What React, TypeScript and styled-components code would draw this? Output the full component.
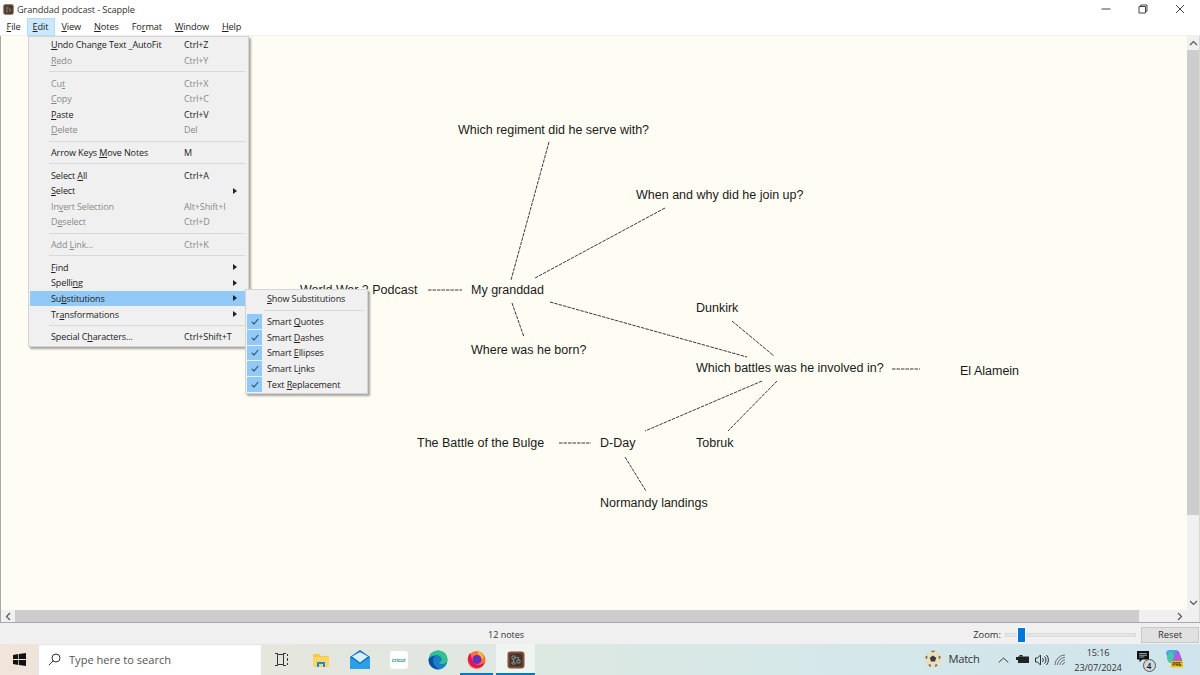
import React from "react";
import styled, { createGlobalStyle } from "styled-components";

const Global = createGlobalStyle`
  html, body { margin: 0; padding: 0; width: 1200px; height: 675px; overflow: hidden; background: #fff; }
  body { font-family: "Open Sans", "Liberation Sans", sans-serif; color: #1c1c1c; }
  * { box-sizing: border-box; }
  u { text-underline-offset: 1px; text-decoration-thickness: 1px; }
`;

const Page = styled.div`
  width: 1200px; height: 675px; position: relative;
  display: flex; flex-direction: column; overflow: hidden;
`;
const TitleBar = styled.div`
  height: 18px; flex: none; display: flex; align-items: center; padding: 0 2px 0 3px; gap: 3px; background: #fff;
`;
const TitleText = styled.span`font-size: 9.2px; letter-spacing: -0.1px; color: #333; flex: 1;`;
const WinControls = styled.div`display: flex; align-items: center; height: 18px;`;
const WinButton = styled.div`width: 37px; height: 18px; display: flex; align-items: center; justify-content: center;`;
const MenuBar = styled.div`
  height: 18px; flex: none; display: flex; background: #fff; font-size: 9.2px; letter-spacing: -0.12px; border-bottom: 1px solid #f0f0f0;
`;
const MenuTitle = styled.div<{ $open?: boolean }>`
  padding: ${p => (p.$open ? "0 6.5px 0 5.5px" : "0 6.5px")}; line-height: 17px; height: 18px; color: #222;
  background: ${p => (p.$open ? "#cce8ff" : "transparent")};
  box-shadow: ${p => (p.$open ? "inset 0 0 0 1px #b4dcfa" : "none")};
`;

const Workspace = styled.div`
  flex: none; height: 587px; display: grid;
  grid-template-columns: 1186px 13px; grid-template-rows: 574px 12px;
  border-left: 1px solid #a8a8a8; border-bottom: 1px solid #a8a8a8;
`;
const Canvas = styled.div`position: relative; background: #fffdf3; overflow: hidden;`;
const Links = styled.svg`position: absolute; left: -1px; top: -36px;`;
const Note = styled.div<{ $x: number; $y: number }>`
  position: absolute; left: ${p => p.$x - 1}px; top: ${p => p.$y - 36 - 9}px;
  font: 12.5px/18px "Liberation Sans", Arial, sans-serif; color: #1a1a1a; white-space: nowrap;
`;
const VScroll = styled.div`
  background: #f0f0f0; display: flex; flex-direction: column; align-items: center; border-right: 1px solid #d8d8d8;
`;
const VArrow = styled.div`height: 14px; width: 100%; display: flex; align-items: center; justify-content: center; flex: none;`;
const VThumb = styled.div`width: 100%; height: 465px; background: #cdcdcd; flex: none;`;
const VTrack = styled.div`flex: 1;`;
const HScroll = styled.div`background: #f0f0f0; display: flex; align-items: center;`;
const HArrow = styled.div`width: 14px; height: 100%; display: flex; align-items: center; justify-content: center; flex: none;`;
const HThumb = styled.div`width: 1124px; height: 100%; background: #cdcdcd; flex: none;`;
const HTrack = styled.div`flex: 1;`;
const Corner = styled.div`background: #f0f0f0; border-right: 1px solid #d8d8d8;`;

const StatusBar = styled.div`
  height: 21px; flex: none; background: #f0f0f0; display: flex; align-items: center; font-size: 9px; color: #333; padding-top: 2px;
`;
const NoteCount = styled.span`margin-left: 488px;`;
const ZoomGroup = styled.div`margin-left: auto; display: flex; align-items: center;`;
const ZoomLabel = styled.span`margin-right: 4px; font-size: 9.4px;`;
const ZoomTrack = styled.div`width: 131px; height: 4px; background: #e4e4e4; border: 1px solid #dcdcdc; position: relative;`;
const ZoomThumb = styled.div`position: absolute; left: 11px; top: -7px; width: 9px; height: 16px; background: #0078d7; border: 1px solid #fff;`;
const ResetButton = styled.div`
  width: 58px; height: 16px; margin: 0 1px 0 5px; background: #e1e1e1; border: 1px solid #c8c8c8;
  text-align: center; line-height: 14px; font-size: 9.4px;
`;

const Taskbar = styled.div`
  height: 31px; flex: none; display: flex; align-items: stretch;
  background: linear-gradient(90deg, #f1e4da 0%, #e6e6dd 22%, #dde8e2 45%, #d6e8e8 65%, #cfe4ec 100%);
`;
const StartButton = styled.div`width: 38px; display: flex; align-items: center; justify-content: center;`;
const SearchBox = styled.div`
  width: 224px; background: #fff; display: flex; align-items: center; padding: 0 0 2px 9px; gap: 8px;
  font-size: 11.1px; color: #555; border: 1px solid #e4e4e4; border-bottom: 0;
`;
const TaskSlot = styled.div<{ $active?: boolean; $running?: boolean }>`
  width: 39px; display: flex; align-items: center; justify-content: center; position: relative;
  background: ${p => (p.$active ? "rgba(255,255,255,.55)" : "transparent")};
  &::after {
    content: ""; position: absolute; bottom: 0; height: 2px; background: #0078d4;
    left: ${p => (p.$running ? "3px" : "0")}; right: ${p => (p.$running ? "3px" : "0")};
    display: ${p => (p.$active || p.$running ? "block" : "none")};
  }
`;
const CricutTile = styled.div`
  width: 18px; height: 18px; background: #fff; border-radius: 3px; display: flex; align-items: center; justify-content: center;
  font: bold 5.2px "Liberation Sans", sans-serif; color: #1f9d78; letter-spacing: -0.1px;
`;
const Tray = styled.div`margin-left: auto; display: flex; align-items: center; color: #333; padding: 0 10px 2px 0;`;
const Weather = styled.div`display: flex; align-items: center; gap: 7px; font-size: 11.2px; letter-spacing: -0.3px; margin-right: 14.5px;`;
const TrayIcon = styled.div`width: 19px; display: flex; align-items: center; justify-content: center; padding-top: 2px;`;
const Clock = styled.div`width: 56px; text-align: center; font-size: 9.2px; letter-spacing: -0.15px; line-height: 15px; color: #333; padding-top: 2px;`;
const NotifyWrap = styled.div`width: 28px; margin-left: 4px; height: 24px; position: relative; display: flex; align-items: center; justify-content: center;`;
const Badge = styled.div`
  position: absolute; left: 12.5px; top: 12px; width: 13px; height: 13px; border-radius: 50%;
  background: #cfd8dc; border: 1px solid #555; font-size: 8px; line-height: 11px; text-align: center; color: #111; font-weight: 600;
`;
const CopilotWrap = styled.div`width: 32px; display: flex; align-items: center; justify-content: center;`;

const PopupMenu = styled.div`
  position: absolute; left: 28px; top: 36px; width: 221px; height: 311px; padding: 0 0 0 1px;
  background: #f0f0f0; border: 1px solid #d4d4d4; box-shadow: 2px 2px 2px rgba(0,0,0,.35); z-index: 2;
  font-size: 9px; letter-spacing: -0.12px;
`;
const SubMenu = styled.div`
  position: absolute; left: 245px; top: 289px; width: 123px; height: 105px; padding: 1px 0 0 0;
  background: #f0f0f0; border: 1px solid #d4d4d4; box-shadow: 2px 2px 2px rgba(0,0,0,.35); z-index: 3;
  font-size: 9px; letter-spacing: -0.12px;
`;
const MenuRow = styled.div<{ $disabled?: boolean; $hot?: boolean }>`
  height: 15.6px; display: grid; grid-template-columns: 21px 133px 50px 10px; align-items: center; white-space: nowrap;
  line-height: 15px;
  color: ${p => (p.$disabled ? "#8a8a8a" : "#222")};
  background: ${p => (p.$hot ? "#91c9f7" : "transparent")};
`;
const RowLabel = styled.span`grid-column: 2;`;
const RowKey = styled.span`grid-column: 3 / 5;`;
const RowArrow = styled.span`
  grid-column: 4; justify-self: start; width: 0; height: 0; margin-left: -1px;
  border-left: 4px solid #222; border-top: 3px solid transparent; border-bottom: 3px solid transparent;
`;
const MenuSep = styled.div`height: 1px; background: #d9d9d9; margin: 3px 3px 3.07px 19px;`;
const SubSep = styled.div`height: 1px; background: #d9d9d9; margin: 3px 3px 3.4px 18px;`;
const SubRow = styled.div`
  height: 15.6px; display: grid; grid-template-columns: 15px 1fr; column-gap: 5px; align-items: center; padding-left: 1px; line-height: 15px; color: #222; white-space: nowrap;
`;
const CheckCell = styled.div<{ $on?: boolean }>`
  height: 14.8px; display: flex; align-items: center; justify-content: center;
  background: ${p => (p.$on ? "#91c9f7" : "transparent")};
`;

const Lab = ({ t }: { t: string }) => {
  const i = t.indexOf("&");
  if (i < 0) return <>{t}</>;
  return <>{t.slice(0, i)}<u>{t[i + 1]}</u>{t.slice(i + 2)}</>;
};

type Item = { l?: string; k?: string; d?: boolean; a?: boolean; hot?: boolean; sep?: boolean };
const items: Item[] = [
  { l: "&Undo Change Text _AutoFit", k: "Ctrl+Z" },
  { l: "&Redo", k: "Ctrl+Y", d: true },
  { sep: true },
  { l: "Cu&t", k: "Ctrl+X", d: true },
  { l: "&Copy", k: "Ctrl+C", d: true },
  { l: "&Paste", k: "Ctrl+V" },
  { l: "&Delete", k: "Del", d: true },
  { sep: true },
  { l: "Arrow Keys &Move Notes", k: "M" },
  { sep: true },
  { l: "Select &All", k: "Ctrl+A" },
  { l: "&Select", a: true },
  { l: "In&vert Selection", k: "Alt+Shift+I", d: true },
  { l: "D&eselect", k: "Ctrl+D", d: true },
  { sep: true },
  { l: "Add &Link...", k: "Ctrl+K", d: true },
  { sep: true },
  { l: "&Find", a: true },
  { l: "Spelli&ng", a: true },
  { l: "Su&bstitutions", a: true, hot: true },
  { l: "Tr&ansformations", a: true },
  { sep: true },
  { l: "Special C&haracters...", k: "Ctrl+Shift+T" },
];
const subs = ["Smart &Quotes", "Smart &Dashes", "Smart &Ellipses", "Smart L&inks", "Text &Replacement"];
const menus = ["&File", "&Edit", "&View", "&Notes", "Fo&rmat", "&Window", "&Help"];
const notes: [string, number, number][] = [
  ["Which regiment did he serve with?", 458, 130],
  ["When and why did he join up?", 636, 195],
  ["World War 2 Podcast", 300, 290],
  ["My granddad", 471, 290],
  ["Where was he born?", 471, 350],
  ["Dunkirk", 696, 308],
  ["Which battles was he involved in?", 696, 368],
  ["El Alamein", 960, 371],
  ["The Battle of the Bulge", 417, 443],
  ["D-Day", 600, 443],
  ["Tobruk", 696, 443],
  ["Normandy landings", 600, 503],
];
const lines: number[][] = [
  [549, 142, 511, 280], [665, 208, 535, 278], [428, 290, 462, 290], [550, 302, 747, 357],
  [512, 303, 524, 337], [732, 321, 774, 356], [762, 381, 645, 431], [777, 381, 728, 431],
  [559, 443, 591, 443], [625, 457, 646, 491], [892, 369, 920, 369],
];

const ScappleIcon = ({ s }: { s: number }) => (
  <svg width={s} height={s} viewBox="0 0 18 18">
    <rect x="0.5" y="0.5" width="17" height="17" rx="3" fill="#8a4f33" />
    <rect x="2.5" y="2.5" width="13" height="13" rx="1.5" fill="#3b3632" />
    <path d="M5 5h3v3H5zM10 9h3v3h-3zM5 11h3v2H5z" fill="none" stroke="#9b948c" strokeWidth=".9" />
    <path d="M8 6.5h3.5V9M6.5 8v3" fill="none" stroke="#9b948c" strokeWidth=".8" />
  </svg>
);

export default function App() {
  return (
    <Page>
      <Global />
      <TitleBar>
        <ScappleIcon s={11} />
        <TitleText>Granddad podcast - Scapple</TitleText>
        <WinControls>
          <WinButton>
            <svg width="10" height="10" viewBox="0 0 10 10"><path d="M0.5 5h9" stroke="#444" /></svg>
          </WinButton>
          <WinButton>
            <svg width="10" height="10" viewBox="0 0 10 10"><path d="M1 2.5h6.5V9H1zM2.8 2.5V1H9v6.2H7.5" fill="none" stroke="#444" /></svg>
          </WinButton>
          <WinButton>
            <svg width="10" height="10" viewBox="0 0 10 10"><path d="M1 1l8 8M9 1l-8 8" stroke="#444" /></svg>
          </WinButton>
        </WinControls>
      </TitleBar>
      <MenuBar>
        {menus.map(m => (
          <MenuTitle key={m} $open={m === "&Edit"}><Lab t={m} /></MenuTitle>
        ))}
      </MenuBar>
      <Workspace>
        <Canvas>
          <Links width="1200" height="675">
            {lines.map((l, i) => (
              <line key={i} x1={l[0]} y1={l[1]} x2={l[2]} y2={l[3]} stroke="#222" strokeWidth="0.9" strokeDasharray="3.5 1" />
            ))}
          </Links>
          {notes.map(([t, x, y]) => (
            <Note key={t} $x={x} $y={y}>{t}</Note>
          ))}
        </Canvas>
        <VScroll>
          <VArrow>
            <svg width="9" height="6" viewBox="0 0 9 6"><path d="M1 5l3.5-3.5L8 5" fill="none" stroke="#555" strokeWidth="1.2" /></svg>
          </VArrow>
          <VThumb />
          <VTrack />
          <VArrow>
            <svg width="9" height="6" viewBox="0 0 9 6"><path d="M1 1l3.5 3.5L8 1" fill="none" stroke="#555" strokeWidth="1.2" /></svg>
          </VArrow>
        </VScroll>
        <HScroll>
          <HArrow>
            <svg width="6" height="9" viewBox="0 0 6 9"><path d="M5 1L1.5 4.5 5 8" fill="none" stroke="#555" strokeWidth="1.2" /></svg>
          </HArrow>
          <HThumb />
          <HTrack />
          <HArrow>
            <svg width="6" height="9" viewBox="0 0 6 9"><path d="M1 1l3.5 3.5L1 8" fill="none" stroke="#555" strokeWidth="1.2" /></svg>
          </HArrow>
        </HScroll>
        <Corner />
      </Workspace>
      <StatusBar>
        <NoteCount>12 notes</NoteCount>
        <ZoomGroup>
          <ZoomLabel>Zoom:</ZoomLabel>
          <ZoomTrack><ZoomThumb /></ZoomTrack>
          <ResetButton>Reset</ResetButton>
        </ZoomGroup>
      </StatusBar>
      <Taskbar>
        <StartButton>
          <svg width="13" height="13" viewBox="0 0 13 13"><path d="M0 1.9l5.3-.8v5H0zM6 1L13 0v6.1H6zM0 6.9h5.3v5L0 11.1zM6 6.9h7V13l-7-1z" fill="#111" /></svg>
        </StartButton>
        <SearchBox>
          <svg width="13" height="13" viewBox="0 0 13 13"><circle cx="8" cy="5" r="4" fill="none" stroke="#333" /><path d="M5.2 7.8L.8 12.2" stroke="#333" /></svg>
          Type here to search
        </SearchBox>
        <TaskSlot>
          <svg width="14" height="13" viewBox="0 0 14 13"><path d="M2.5 1.5h6v10h-6zM0 .5h3M0 12.5h3M8 .5h3M8 12.5h3" fill="none" stroke="#333" /><path d="M12.5 1v2M12.5 5v3M12.5 10v2" stroke="#333" /></svg>
        </TaskSlot>
        <TaskSlot>
          <svg width="18" height="16" viewBox="0 0 18 16">
            <path d="M1 2h6l2 2h8v10H1z" fill="#f7c843" />
            <path d="M1 5h16v9a1 1 0 0 1-1 1H2a1 1 0 0 1-1-1z" fill="#fbd667" />
            <path d="M5 15v-5h8v5h-2v-3H7v3z" fill="#1f86d8" />
          </svg>
        </TaskSlot>
        <TaskSlot>
          <svg width="20" height="19" viewBox="0 0 20 19">
            <path d="M10 0l10 7v11a1 1 0 0 1-1 1H1a1 1 0 0 1-1-1V7z" fill="#0f6cbd" />
            <path d="M2 6.5L10 2l8 4.5-8 6z" fill="#d9f0fb" />
            <path d="M0 7l10 7 10-7v11a1 1 0 0 1-1 1H1a1 1 0 0 1-1-1z" fill="#2aa0e6" />
          </svg>
        </TaskSlot>
        <TaskSlot><CricutTile>cricut</CricutTile></TaskSlot>
        <TaskSlot>
          <svg width="20" height="20" viewBox="0 0 20 20">
            <circle cx="10" cy="10" r="9.5" fill="#1a7fc9" />
            <path d="M.7 9C2 3.5 6 .5 10 .5c5.5 0 9.5 4 9.5 8.800 0 3.200-2.500 4.700-5 4.700-1.500 0-3-.5-3.500-1.500 2.500-.5 3.500-2.500 2.500-4.500C12 5.500 9 4.500 6 5.500 3.500 6.300 1.500 7.500.7 9z" fill="#2fc28b" />
            <path d="M.7 9c1.500-2 4-3.200 6.500-3 -2.500 1.500-3 5 -1.500 8 1.200 2.400 3.500 4.500 6.300 5.300C6 20 0 15.500.7 9z" fill="#0b4f9e" />
          </svg>
        </TaskSlot>
        <TaskSlot $running>
          <svg width="19" height="19" viewBox="0 0 19 19">
            <circle cx="9.500" cy="10" r="9" fill="#ff7139" />
            <path d="M3 3c-2.500 3-2.500 7-1 10 2 4 6 5.500 9 5 3-.5 6-3 7-6-3 3-8 4-11 1C4.500 10.500 5 7 3 3z" fill="#e3145a" />
            <circle cx="10" cy="9.500" r="4.600" fill="#6b2fc0" />
            <path d="M11 0c1 2 4 3 5 6 .5 2 0 3-1 4-.5-3-2-5-4-6z" fill="#ffc02e" />
          </svg>
        </TaskSlot>
        <TaskSlot $active><ScappleIcon s={18} /></TaskSlot>
        <Tray>
          <Weather>
            <svg width="18" height="18" viewBox="0 0 18 18">
              <circle cx="9" cy="9" r="8.500" fill="#e8dfc0" />
              <path d="M9 5.500l3.200 2.300-1.200 3.700H7l-1.200-3.700z" fill="#3e3b32" />
              <path d="M6.500 .8L9 2.500l2.500-1.700zM1 7l2.500-1.500L3 9.500zM17 7l-2.500-1.500L15 9.500zM4 15l2.500-1 .5 3.200zM14 15l-2.500-1-.5 3.200z" fill="#6d6755" />
            </svg>
            Match
          </Weather>
          <TrayIcon>
            <svg width="11" height="6" viewBox="0 0 11 6"><path d="M.7 5.500L5.500 1l4.800 4.500" fill="none" stroke="#333" /></svg>
          </TrayIcon>
          <TrayIcon>
            <svg width="14" height="9" viewBox="0 0 14 9"><rect x="2" y="1.500" width="11" height="6.500" fill="#222" /><path d="M0 2h2v3H0z" fill="#222" /><rect x="3.500" y="0" width="3" height="1.500" fill="#222" /></svg>
          </TrayIcon>
          <TrayIcon>
            <svg width="14" height="12" viewBox="0 0 14 12"><path d="M.5 4h2l3-3v10l-3-3h-2z" fill="none" stroke="#333" /><path d="M7.500 4a3 3 0 0 1 0 4M9.500 2.500a5 5 0 0 1 0 7M11.500 1a7.500 7.500 0 0 1 0 10" fill="none" stroke="#333" /></svg>
          </TrayIcon>
          <TrayIcon>
            <svg width="13" height="12" viewBox="0 0 13 12"><path d="M1 11a10 10 0 0 1 10-10M3.500 11a7.500 7.500 0 0 1 7.500-7.500M6 11a5 5 0 0 1 5-5M8.500 11A2.500 2.500 0 0 1 11 8.500" fill="none" stroke="#555" strokeWidth=".8" /></svg>
          </TrayIcon>
          <Clock>15:16<br />23/07/2024</Clock>
          <NotifyWrap>
            <svg width="12" height="12" viewBox="0 0 14 14" style={{ marginRight: 2, marginTop: -3 }}>
              <path d="M0 0h14v10H6l-3 3v-3H0z" fill="#111" />
              <path d="M2.500 3h9M2.500 5h9M2.500 7h6" stroke="#d6e6ea" strokeWidth=".8" />
            </svg>
            <Badge>4</Badge>
          </NotifyWrap>
          <CopilotWrap>
            <svg width="18" height="19" viewBox="0 0 18 19">
              <path d="M5 1h6c2 0 3 1 3.500 3L17 11c.5 2-1 3-3 3H7c-2 0-3-1-3.500-3L1 4c0-2 2-3 4-3z" fill="#4aa0e8" />
              <path d="M2 9l2-5c.5-1.500 2-2 3-1l2 4-3 7c-2 .5-4-3-4-5z" fill="#46c7a8" />
              <path d="M9 7l3-5c1 0 2 .5 2.500 2L17 11c0 1.500-1 3-3 3H8z" fill="#b35ed6" />
              <rect x="6" y="12" width="12" height="6.500" rx="1" fill="#f7c300" />
              <text x="12" y="17" textAnchor="middle" fontSize="4.500" fontWeight="700" fontFamily="Liberation Sans" fill="#222">PRE</text>
            </svg>
          </CopilotWrap>
        </Tray>
      </Taskbar>

      <PopupMenu>
        {items.map((it, i) =>
          it.sep ? <MenuSep key={i} /> : (
            <MenuRow key={i} $disabled={it.d} $hot={it.hot}>
              <RowLabel><Lab t={it.l!} /></RowLabel>
              {it.k && <RowKey>{it.k}</RowKey>}
              {it.a && <RowArrow />}
            </MenuRow>
          )
        )}
      </PopupMenu>
      <SubMenu>
        <SubRow><CheckCell /><span><Lab t="&Show Substitutions" /></span></SubRow>
        <SubSep />
        {subs.map(s => (
          <SubRow key={s}>
            <CheckCell $on>
              <svg width="8" height="7" viewBox="0 0 8 7"><path d="M.8 3.800L3 6 7.200 1" fill="none" stroke="#2c4a66" strokeWidth="1.100" /></svg>
            </CheckCell>
            <span><Lab t={s} /></span>
          </SubRow>
        ))}
      </SubMenu>
    </Page>
  );
}
